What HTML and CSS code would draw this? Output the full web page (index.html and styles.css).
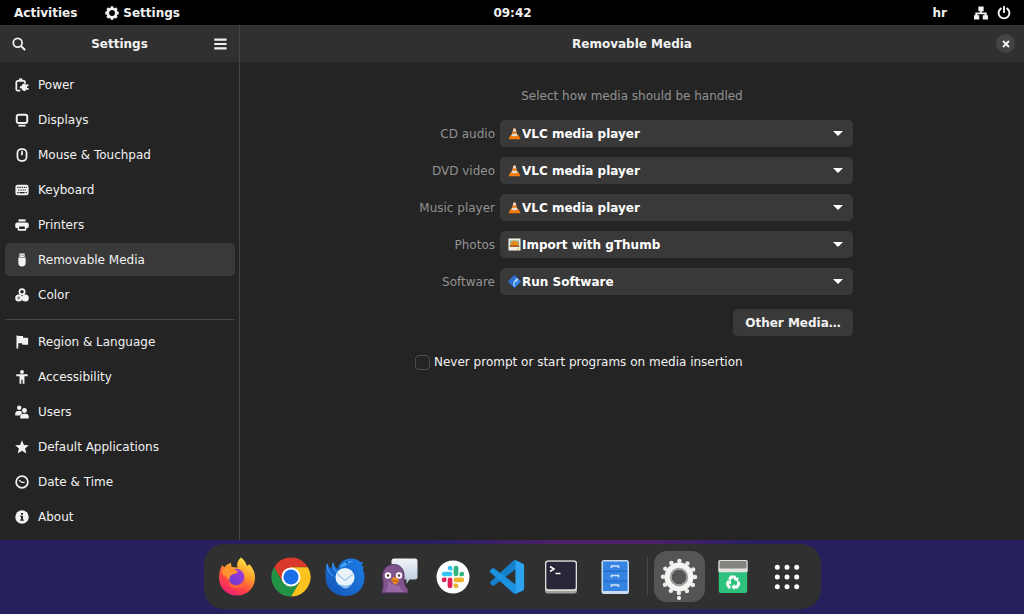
FILE: index.html
```html
<!DOCTYPE html>
<html lang="en">

<head>
  <meta charset="UTF-8">
  <meta name="viewport" content="width=device-width, initial-scale=1">
  <title>Settings - Removable Media</title>
  <link rel="stylesheet" href="styles.css">
</head>
<body>
  <svg class="defs" aria-hidden="true">
    <symbol id="vlc" viewBox="0 0 14 14">
      <path d="M2.4 9h9.2l1.8 4.2H.6z" fill="#f57c0a"/>
      <path d="M6.2 1h1.6l2.9 9.3c-1.6 1.1-5.8 1.1-7.4 0z" fill="#ef7d14"/>
      <path d="M5.9 2h2.2l.9 2.8H5zM4.2 7.2h5.6l.6 2c-1.6.9-5.2.9-6.8 0z" fill="#dedcd8"/>
    </symbol>
    <symbol id="gear" viewBox="0 0 16 16">
      <circle cx="8" cy="8" r="4.9" fill="none" stroke="currentColor" stroke-width="3"/>
      <path d="M8 .3v3M8 12.700v3M.3 8h3M12.700 8h3M2.600 2.600l2 2M11.400 11.400l2 2M2.600 13.400l2-2M11.400 4.600l2-2" stroke="currentColor" stroke-width="3.200"/>
    </symbol>
  </svg>

  <header class="topbar">
    <div class="topbar-left">
      <button type="button">Activities</button>
      <button type="button"><svg class="icon"><use href="#gear"/></svg>Settings</button>
    </div>
    <time>09:42</time>
    <div class="topbar-right">
      <button type="button" class="lang">hr</button>
      <button type="button" aria-label="Network">
        <svg class="icon" viewBox="0 0 16 16" fill="currentColor"><path d="M5 .500h6v5.500H9v1.500h5.500V10.500H16V15.500h-6v-5h2V9.500H4v1h2v5H0v-5h1.500V7.500H7V6H5z"/></svg>
      </button>
      <button type="button" aria-label="Power off">
        <svg class="icon" viewBox="0 0 16 16" fill="none" stroke="currentColor" stroke-width="2.200" stroke-linecap="round"><path d="M4.300 3a6.200 6.200 0 1 0 7.400 0M8 1v6"/></svg>
      </button>
    </div>
  </header>

  <div class="window">
    <aside class="sidebar">
      <div class="headerbar">
        <button type="button" aria-label="Search">
          <svg class="icon" viewBox="0 0 16 16" fill="none" stroke="currentColor" stroke-width="2"><circle cx="6.500" cy="6.500" r="5"/><path d="M10 10l5 5" stroke-width="2.400"/></svg>
        </button>
        <h2>Settings</h2>
        <button type="button" aria-label="Menu">
          <svg class="icon" viewBox="0 0 16 16" stroke="currentColor" stroke-width="2.300"><path d="M1.500 3h14M1.500 8h14M1.500 13h14"/></svg>
        </button>
      </div>
      <nav>
        <a href="#power"><svg class="icon" viewBox="0 0 16 16"><path d="M6 14.500H3.200a1.700 1.700 0 0 1-1.700-1.700V5a1.700 1.700 0 0 1 1.700-1.700h6.600A1.700 1.700 0 0 1 11.500 5v1" fill="none" stroke="currentColor" stroke-width="2"/><path d="M4.500.500h4v2.500h-4zM12 6v1.500h3.500v2H13.800v2h1.700v2H12V15c-2.500 0-4-1.200-4.600-3.300H5.500V9.500h1.900C8 7.200 9.500 6 12 6z" fill="currentColor"/></svg>Power</a>
        <a href="#displays"><svg class="icon" viewBox="0 0 16 16"><rect x="2" y="2" width="12" height="9.500" rx="2" fill="none" stroke="currentColor" stroke-width="2.200"/><path d="M4 13.500h8V15.500H4z" fill="currentColor"/></svg>Displays</a>
        <a href="#mouse"><svg class="icon" viewBox="0 0 16 16" fill="none" stroke="currentColor" stroke-width="2"><rect x="2.800" y="1.200" width="10.400" height="13.600" rx="4.500"/><path d="M8 4v3.500" stroke-linecap="round"/></svg>Mouse &amp; Touchpad</a>
        <a href="#keyboard"><svg class="icon" viewBox="0 0 16 16"><rect x=".500" y="2" width="15" height="12" rx="2.200" fill="currentColor"/><path d="M2.500 5h11M3.500 8h9" stroke="#242424" stroke-width="1.300" stroke-dasharray="1.500 1"/><path d="M2.500 11h1.500M5 11h6M12 11h1.500" stroke="#242424" stroke-width="1.300"/></svg>Keyboard</a>
        <a href="#printers"><svg class="icon" viewBox="0 0 16 16" fill="currentColor"><path d="M4 1.500h8V4H4z"/><path d="M2.500 5h11a2.200 2.200 0 0 1 2.200 2.200V10a1.500 1.500 0 0 1-1.500 1.500H13V13a1.700 1.700 0 0 1-1.700 1.700H4.700A1.700 1.700 0 0 1 3 13v-1.500H1.800A1.500 1.500 0 0 1 .300 10V7.200A2.200 2.200 0 0 1 2.500 5zM4.800 9.800V12.700h6.400V9.800z" fill-rule="evenodd"/></svg>Printers</a>
        <a href="#removable-media" class="active"><svg class="icon" viewBox="0 0 16 16" fill="currentColor"><path d="M5 .500h6V4.500H5zM6.300 2v1.200h1V2zM8.700 2v1.200h1V2z" fill-rule="evenodd"/><path d="M3.800 5h8.400v6.500c0 2.500-1.500 4-4.200 4s-4.200-1.500-4.200-4z"/></svg>Removable Media</a>
        <a href="#color"><svg class="icon" viewBox="0 0 16 16"><circle cx="8" cy="4.300" r="3" fill="none" stroke="currentColor" stroke-width="2"/><circle cx="4.200" cy="11.300" r="4" fill="currentColor"/><circle cx="11.800" cy="11.300" r="4" fill="currentColor"/><circle cx="4.200" cy="11.300" r="1.800" fill="#999"/></svg>Color</a>
        <hr>
        <a href="#region"><svg class="icon" viewBox="0 0 16 16" fill="currentColor"><path d="M1.700.500h2V1h5.500v2H14l1 .800v7.200H8.500L8 9.500H3.700v6h-2z"/></svg>Region &amp; Language</a>
        <a href="#accessibility"><svg class="icon" viewBox="0 0 16 16" fill="currentColor"><circle cx="8" cy="2.200" r="2.200"/><path d="M1.500 4.800h13v2.400h-3.700v8.600H8.800V11H7.200v4.800h-2V7.200H1.500z"/></svg>Accessibility</a>
        <a href="#users"><svg class="icon" viewBox="0 0 16 16" fill="currentColor"><circle cx="4.800" cy="3.200" r="2.500"/><path d="M.300 12V9.500A3 3 0 0 1 3.300 6.800H7L8.200 9 5.500 12z"/><circle cx="10.800" cy="6.300" r="2.800"/><path d="M6 15.300v-2a3.500 3.500 0 0 1 3.500-3.300h2.700a3.500 3.500 0 0 1 3.500 3.300v2z"/></svg>Users</a>
        <a href="#default-apps"><svg class="icon" viewBox="0 0 16 16" fill="currentColor"><path d="M8 .300l2.200 5.400 5.600.300-4.300 3.700L13 15.500 8 12.300 3 15.500l1.500-5.800L.200 6l5.600-.300z"/></svg>Default Applications</a>
        <a href="#date-time"><svg class="icon" viewBox="0 0 16 16" fill="none" stroke="currentColor"><circle cx="8" cy="8" r="6.700" stroke-width="2"/><path d="M4.500 6L8 8.500h3" stroke-width="1.500"/></svg>Date &amp; Time</a>
        <a href="#about"><svg class="icon" viewBox="0 0 16 16"><circle cx="8" cy="8" r="7.700" fill="currentColor"/><path d="M6.900 3.300h2.200v2H6.900zM6 6.500h3.100v4.300H10v1.500H6v-1.500h.900V8H6z" fill="#242424"/></svg>About</a>
      </nav>
    </aside>

    <main>
      <div class="headerbar">
        <h1>Removable Media</h1>
        <button type="button" class="close" aria-label="Close">
          <svg viewBox="0 0 8 8" stroke="currentColor" stroke-width="2"><path d="M1 1l6 6M7 1L1 7"/></svg>
        </button>
      </div>

      <form class="media-form">
        <p>Select how media should be handled</p>

        <div class="row">
          <label for="cd">CD audio</label>
          <div class="combo">
            <svg class="app"><use href="#vlc"/></svg>
            <select id="cd"><option>VLC media player</option></select>
          </div>
        </div>
        <div class="row">
          <label for="dvd">DVD video</label>
          <div class="combo">
            <svg class="app"><use href="#vlc"/></svg>
            <select id="dvd"><option>VLC media player</option></select>
          </div>
        </div>
        <div class="row">
          <label for="music">Music player</label>
          <div class="combo">
            <svg class="app"><use href="#vlc"/></svg>
            <select id="music"><option>VLC media player</option></select>
          </div>
        </div>
        <div class="row">
          <label for="photos">Photos</label>
          <div class="combo">
            <svg class="app" viewBox="0 0 14 14"><path d="M.500.500h13v13H.500z" fill="#f1f0e2"/><path d="M2 2.500h10v7H2z" fill="#8fb5a3"/><path d="M3 6.500C3 4.500 5 3 7 3s4.500 1.500 4.500 4v2.500H2.500z" fill="#e8891c"/><path d="M2 8h10v1.500H2z" fill="#94501c"/><path d="M9 11.500l3-1-1 2.500z" fill="#e8cf52"/></svg>
            <select id="photos"><option>Import with gThumb</option></select>
          </div>
        </div>
        <div class="row">
          <label for="software">Software</label>
          <div class="combo">
            <svg class="app" viewBox="0 0 14 14"><path d="M7 .400L13.600 7 7 13.600.400 7z" fill="#3584e4" stroke="#3584e4" stroke-linejoin="round"/><path d="M.400 7L7 .400 9 2.400 5 8l2 5.600z" fill="#2a6dce"/><path d="M6.500 12V8.500C6.500 6.500 8 6 10 5M8.500 3.800L10.300 5 9 6.700" fill="none" stroke="#b9d5f6" stroke-width="1.300"/></svg>
            <select id="software"><option>Run Software</option></select>
          </div>
        </div>

        <button type="button" class="other">Other Media…</button>
        <label class="check"><input type="checkbox" name="never">Never prompt or start programs on media insertion</label>
      </form>
    </main>
  </div>

  <footer class="desktop">
    <div class="dock">
      <button type="button" aria-label="Firefox">
        <svg viewBox="0 0 40 40">
          <defs>
            <linearGradient id="fx" x1=".8" y1="0" x2=".25" y2="1"><stop offset="0" stop-color="#fff14a"/><stop offset=".4" stop-color="#ff9a2b"/><stop offset=".7" stop-color="#ff4345"/><stop offset="1" stop-color="#ee1d78"/></linearGradient>
            <linearGradient id="fxb" x1="0" y1="1" x2="1" y2="0"><stop offset="0" stop-color="#6238c8"/><stop offset="1" stop-color="#a63de0"/></linearGradient>
          </defs>
          <path d="M24 .500c2.500 2 4.500 4 5.700 8 1.200 0 2-.500 2.600-1.500 4 4 6 9 5.700 14.500C37.500 31.500 30 38.500 20 38.500S2 31 2 20.500c0-4 1-8.500 3.200-12.500l2 2.500C9 8 11.500 6.500 14 6l.500 4 6 .500c-1-4 .5-7.500 3.500-10z" fill="url(#fx)"/>
          <circle cx="19" cy="20" r="8.300" fill="url(#fxb)"/>
          <path d="M5 14c3-4 6-4.500 9.500-4l6.500 4.500c-1 2-3.500 2.500-5.500 2.700-2 1-3.500 3-3 6-3.500-2-3-5-6-5z" fill="#ff932f"/>
          <path d="M12 23.500c1.500 4 5 5.500 8.500 5 4-.500 6.200-3.500 6.700-7 1.800 5-1 10-7.200 10s-9-4-8-8z" fill="#ff663a"/>
        </svg>
      </button>
      <button type="button" aria-label="Google Chrome">
        <svg viewBox="0 0 40 40">
          <path d="M3.100 10.200A19.500 19.500 0 0 1 36.900 10.200H20V20l-8.400 4.900z" fill="#d93a2b"/>
          <path d="M36.900 10.200A19.500 19.500 0 0 1 20 39.500l8.400-14.600L20 20v-9.800z" fill="#fcc31e"/>
          <path d="M20 39.500A19.500 19.500 0 0 1 3.100 10.200l8.500 14.700L20 20l8.400 4.900z" fill="#229344"/>
          <circle cx="20" cy="20" r="9.500" fill="#fff"/><circle cx="20" cy="20" r="7.600" fill="#1a6fe8"/>
        </svg>
      </button>
      <button type="button" aria-label="Thunderbird">
        <svg viewBox="0 0 40 40">
          <defs><linearGradient id="tb" x1="0" y1="1" x2="1" y2="0"><stop offset="0" stop-color="#1655b8"/><stop offset="1" stop-color="#1c7fe6"/></linearGradient></defs>
          <path d="M2 6.500c1 2 2 3.500 4 5l2-6c1 3 2 5 5 6.500C14 6 19 1.500 26 1.500c4 0 7 1.500 9 3.500l3.500.500-2 2.500 2.500 3-1.300 1.500c1.500 3 2 6 1.800 9C39 32 31 39 20.500 39S1.500 32 .700 22.500C.200 16.500.5 11 2 6.500z" fill="url(#tb)"/>
          <path d="M2 7c0 5 2 9 6 12M8 6c0 4 1 7 4 9" fill="none" stroke="#3c9bee" stroke-width="1.200"/>
          <path d="M14.500 10.500C17 6 22 3.500 28 4c-4 2-6 3-8.500 5.500z" fill="#46a5f5"/>
          <circle cx="20" cy="20.500" r="9.500" fill="#e8f3fc"/>
          <path d="M11.500 16.500L20 23.500l8.500-7" fill="none" stroke="#a6c9e6" stroke-width="1.300"/>
          <path d="M12.500 26c4 3 10 3.500 14 .500-1 4-6 6.500-9 4z" fill="#8abef0"/><circle cx="22" cy="5.500" r="1" fill="#0b3987"/>
        </svg>
      </button>
      <button type="button" aria-label="Pidgin">
        <svg viewBox="0 0 40 40">
          <defs><linearGradient id="bubble" x2="0" y2="1"><stop offset="0" stop-color="#f2f5f9"/><stop offset="1" stop-color="#b5c6dc"/></linearGradient></defs>
          <path d="M15 1.500h21q2.500 0 2.500 2.500v16q0 2.500-2.500 2.500h-5.500l-3 4.500V22.500H15q-2.500 0-2.500-2.500V4q0-2.500 2.500-2.500z" fill="url(#bubble)"/>
          <path d="M2 36c3-4 2-11 1.500-16C3 12 8 7.500 14.500 7.500S25 12 25 19c0 7 1 11 4 13v4z" fill="#80558e" stroke="#50305a"/>
          <path d="M6 35c3-3 3-7 3-11 4 4 9 5 12 5 0 3 2 5 4 6z" fill="#9a6aa6"/>
          <circle cx="9" cy="18.500" r="3.200" fill="#fff"/><circle cx="20" cy="18.500" r="3.200" fill="#fff"/>
          <circle cx="9" cy="18.500" r="1.300" fill="#5a2f49"/><circle cx="20" cy="18.500" r="1.300" fill="#5a2f49"/>
          <path d="M15.500 20c2-.500 4 2 4.500 4.500L16 28l-4-4.500c.500-1.500 1.500-3 3.500-3.500z" fill="#f08a1d"/><path d="M12.500 23.500l7 1" stroke="#a85413"/>
        </svg>
      </button>
      <button type="button" aria-label="Slack">
        <svg viewBox="0 0 40 40">
          <circle cx="20" cy="20" r="16.500" fill="#fff"/>
          <defs><path id="slack-arm" d="M5.042 15.165a2.528 2.528 0 0 1-2.520 2.523A2.528 2.528 0 0 1 0 15.165a2.527 2.527 0 0 1 2.522-2.520h2.520zM6.313 15.165a2.527 2.527 0 0 1 2.521-2.520 2.527 2.527 0 0 1 2.521 2.520v6.313A2.528 2.528 0 0 1 8.834 24a2.528 2.528 0 0 1-2.521-2.522z"/></defs>
          <g transform="translate(8.700 8.700) scale(.94)">
            <use href="#slack-arm" fill="#e01e5a"/>
            <use href="#slack-arm" fill="#36c5f0" transform="rotate(90 12 12)"/>
            <use href="#slack-arm" fill="#2eb67d" transform="rotate(180 12 12)"/>
            <use href="#slack-arm" fill="#ecb22e" transform="rotate(270 12 12)"/>
          </g>
        </svg>
      </button>
      <button type="button" aria-label="Visual Studio Code">
        <svg viewBox="0 0 40 40">
          <g transform="translate(3 3) scale(1.420)">
            <path fill="#1481cd" d="M23.150 2.587L18.210.210a1.494 1.494 0 0 0-1.705.290l-9.460 8.630-4.120-3.128a.999.999 0 0 0-1.276.057L.327 7.261A1 1 0 0 0 .326 8.740L3.899 12 .326 15.260a1 1 0 0 0 .001 1.479L1.650 17.940a.999.999 0 0 0 1.276.057l4.120-3.128 9.460 8.630a1.492 1.492 0 0 0 1.704.290l4.942-2.377A1.500 1.500 0 0 0 24 20.060V3.939a1.500 1.500 0 0 0-.850-1.352zm-5.146 14.861L10.826 12l7.178-5.448z"/>
            <path fill="#2ba3ee" d="M18 .200l5.200 2.400q.800.500.800 1.400v16q0 .900-.800 1.400L18 23.800z"/>
            <path fill="#1a92dd" d="M.300 7.300l1.400-1.200q.700-.500 1.300 0L18 17.500v5.800q-.600.600-1.400 0L.300 8.700q-.600-.700 0-1.400z"/>
          </g>
        </svg>
      </button>
      <button type="button" aria-label="Terminal">
        <svg viewBox="0 0 40 40"><rect x="4" y="3.500" width="32" height="33" rx="3" fill="#a3a19e"/><rect x="4" y="3.500" width="32" height="30.500" rx="3" fill="#deddda"/><rect x="5.300" y="4.800" width="29.400" height="27.500" rx="2" fill="#2a2438"/><path d="M9 9.500l4 2.500-4 2.500M14.500 16.500h5" fill="none" stroke="#fff" stroke-width="1.500"/></svg>
      </button>
      <button type="button" aria-label="Files">
        <svg viewBox="0 0 40 40"><rect x="6.500" y="3" width="27.500" height="34" rx="2.500" fill="#cbdcf0"/><path d="M8 4.500h24.500V34H8z" fill="#3584e4"/><path d="M8 14.300h24.500M8 24.200h24.500" stroke="#2465b8"/><path d="M16.500 11V9h7v2M16.500 20.500v-2h7v2M16.500 30v-2h7v2" fill="none" stroke="#d5e5f8" stroke-width="1.500"/></svg>
      </button>
      <hr>
      <button type="button" class="running" aria-label="Settings">
        <svg viewBox="0 0 40 40">
          <circle cx="20" cy="20" r="16" fill="none" stroke="#edebe8" stroke-width="4.500" stroke-linecap="round" stroke-dasharray="0 8.378"/>
          <circle cx="20" cy="20" r="11" fill="#555" stroke="#f6f5f4" stroke-width="7"/>
          <circle cx="20" cy="20" r="8.300" fill="none" stroke="#9b9996" stroke-width="1.800"/>
        </svg>
      </button>
      <button type="button" aria-label="Trash">
        <svg viewBox="0 0 40 40">
          <path d="M5.800 12h28.400v22q0 2-2 2H7.800q-2 0-2-2z" fill="#2ec27e"/><rect x="5.300" y="3" width="29.400" height="12.300" rx="1.500" fill="#e5e3e0"/><rect x="6.500" y="4" width="27" height="7.500" rx="1" fill="#858481"/>
          <g fill="none" stroke="#fff" stroke-width="2.800"><path d="M16.200 22.700l2-2.700h3.200l1.700 2.700"/><path d="M25 24.500l.800 2.500-1.800 3h-3.500M17.500 30H16l-1.600-3 1.600-3"/></g>
          <path d="M25.500 20l-.500 4.700-4-2zM21.500 27v6l-3-3zM13 24.500l4.700-1.500.5 4.500z" fill="#fff"/>
        </svg>
      </button>
      <button type="button" aria-label="Show Applications">
        <svg viewBox="0 0 40 40"><path d="M10.300 10.300h0M20 10.300h0M29.700 10.300h0M10.300 20h0M20 20h0M29.700 20h0M10.300 29.700h0M20 29.700h0M29.700 29.700h0" stroke="#fff" stroke-width="5" stroke-linecap="round"/></svg>
      </button>
    </div>
  </footer>
</body>
</html>
```

FILE: styles.css
```css
* { box-sizing: border-box; }
body {
  margin: 0;
  min-height: 100vh;
  display: flex;
  flex-direction: column;
  background: #26205f;
  color: #f2f2f2;
  font: 12px/16px "DejaVu Sans", Verdana, sans-serif;
}
.defs { display: none; }
button {
  padding: 0;
  border: 0;
  background: none;
  color: inherit;
  font: inherit;
  font-weight: bold;
}
.icon { width: 14px; height: 14px; flex: none; }

/* top panel */
.topbar {
  display: grid;
  grid-template-columns: 1fr auto 1fr;
  align-items: center;
  height: 25px;
  padding: 0 13px 0 14px;
  background: #000;
  font-weight: bold;
}
.topbar button { display: flex; align-items: center; gap: 4px; }
.topbar-left { display: flex; gap: 28px; }
.topbar-right { display: flex; justify-content: flex-end; gap: 9px; }
.topbar-right .lang { margin-right: 18px; }

/* settings window */
.window { flex: 1; display: flex; background: #242424; }
.sidebar { width: 240px; flex: none; border-right: 1px solid #454545; }
main { flex: 1; }
.headerbar {
  display: flex;
  align-items: center;
  height: 37px;
  padding: 0 12px;
  background: #303030;
}
.headerbar h1, .headerbar h2 {
  flex: 1;
  margin: 0;
  font-size: 12px;
  text-align: center;
}
.headerbar button { display: flex; }
main .headerbar { padding: 0 9px 0 28px; }
.headerbar .close {
  width: 19px;
  height: 19px;
  align-items: center;
  justify-content: center;
  border-radius: 50%;
  background: #444;
}
.close svg { width: 8px; height: 8px; }

nav {
  display: flex;
  flex-direction: column;
  gap: 2px;
  padding: 6px 4px 6px 5px;
}
nav a {
  display: flex;
  align-items: center;
  gap: 9px;
  height: 33px;
  padding-left: 10px;
  border-radius: 5px;
  color: inherit;
  text-decoration: none;
}
nav a.active { background: #393939; }
nav hr {
  width: 100%;
  margin: 6px 0 3px;
  border: 0;
  border-top: 1px solid #454545;
}

.media-form {
  display: flex;
  flex-direction: column;
  gap: 10px;
  width: 100%;
  max-width: 442px;
  margin: 0 auto;
  padding: 26px 0 26px 4px;
}
.media-form p { margin: 0 4px 6px 0; color: #929292; text-align: center; }
.row { display: flex; align-items: center; gap: 5px; }
.row label { width: 80px; color: #929292; text-align: right; white-space: nowrap; }
.combo { position: relative; flex: 1; display: flex; }
.combo .app {
  position: absolute;
  top: 7px;
  left: 8px;
  width: 13px;
  height: 13px;
}
.combo::after {
  content: "";
  position: absolute;
  top: 11px;
  right: 10px;
  border: 5px solid transparent;
  border-top-color: #fff;
  border-bottom: 0;
  pointer-events: none;
}
select {
  appearance: none;
  width: 100%;
  height: 27px;
  padding: 0 26px 0 22px;
  border: 0;
  border-radius: 5px;
  background: #393939;
  color: #fff;
  font: inherit;
  font-weight: bold;
}
.other {
  align-self: flex-end;
  width: 120px;
  height: 27px;
  margin-top: 4px;
  border-radius: 5px;
  background: #393939;
}
.check {
  display: flex;
  align-items: center;
  gap: 4px;
  margin-top: 8px;
}
.check input {
  appearance: none;
  width: 15px;
  height: 15px;
  margin: 0;
  border: 1px solid #4d4d4d;
  border-radius: 4px;
}

/* dock */
.desktop {
  display: flex;
  justify-content: center;
  padding: 4px 0 5px;
  background: linear-gradient(90deg, #26205f 42%, #4c2068 54%, #4c2068 64%, #26205f 74%) top / 100% 4px no-repeat;
}
.dock {
  display: flex;
  align-items: center;
  gap: 3px;
  height: 65px;
  padding: 0 8px;
  border-radius: 20px;
  background: #303030;
}
.dock button {
  position: relative;
  display: flex;
  align-items: center;
  justify-content: center;
  width: 51px;
  height: 51px;
  border-radius: 13px;
}
.dock svg { width: 40px; height: 40px; }
.dock hr {
  width: 1px;
  height: 39px;
  margin: 0 3px;
  border: 0;
  background: #464646;
}
.dock .running { background: #555; }
.running::after {
  content: "";
  position: absolute;
  bottom: 2px;
  width: 4px;
  height: 4px;
  border-radius: 50%;
  background: #fff;
}
```
